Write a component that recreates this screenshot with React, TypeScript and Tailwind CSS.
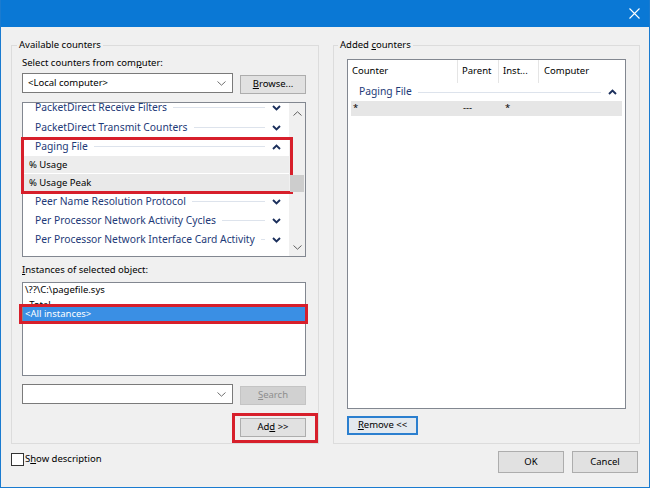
import React from "react";

function Chev({ up }: { up?: boolean }) {
  return (
    <svg width="9" height="6" viewBox="0 0 9 6" className="shrink-0">
      <path
        d={up ? "M1 5L4.5 1.6L8 5" : "M1 1L4.5 4.4L8 1"}
        fill="none"
        stroke="#1b2f5c"
        strokeWidth="1.9"
      />
    </svg>
  );
}

function ThinChev({ up, color = "#606060" }: { up?: boolean; color?: string }) {
  return (
    <svg width="9" height="5" viewBox="0 0 9 5" className="shrink-0">
      <path
        d={up ? "M0.5 4.5L4.5 0.8L8.5 4.5" : "M0.5 0.5L4.5 4.2L8.5 0.5"}
        fill="none"
        stroke={color}
        strokeWidth="1"
      />
    </svg>
  );
}

function Cat({ label, up }: { label: string; up?: boolean }) {
  return (
    <div className="h-[19px] shrink-0 flex items-center pl-[12px] pr-[8px]">
      <span className="text-[10.3px] leading-[19px] text-[#1e3a78] whitespace-nowrap">{label}</span>
      <div className="flex-1 h-px bg-[#dde3ec] ml-[6px] mr-[7px]" />
      <Chev up={up} />
    </div>
  );
}

function Btn({
  children,
  disabled,
  className = "",
}: {
  children: React.ReactNode;
  disabled?: boolean;
  className?: string;
}) {
  return (
    <div
      className={
        "h-[19px] w-[66px] flex items-center justify-center border text-[9.5px] " +
        (disabled
          ? "bg-[#d1d1d1] border-[#c4c4c4] text-[#8e8e8e] "
          : "bg-[#e1e1e1] border-[#adadad] text-black ") +
        className
      }
    >
      {children}
    </div>
  );
}

function Combo({ text }: { text?: string }) {
  return (
    <div className="w-[211px] h-[20px] bg-white border border-[#7a7a7a] flex items-center pl-[5px] pr-[6px]">
      <span className="flex-1 text-[9.5px] text-black whitespace-nowrap">{text}</span>
      <ThinChev color="#707070" />
    </div>
  );
}

export default function App() {
  return (
    <div className="w-[650px] h-[488px] bg-[#f0f0f0] border-x border-b border-[#1a7bd0] flex flex-col font-['Noto_Sans',sans-serif] text-black overflow-hidden">
      {/* title bar */}
      <div className="h-[27px] shrink-0 bg-[#0a78d5] flex items-center justify-end pr-[9px]">
        <svg width="11" height="11" viewBox="0 0 11 11">
          <path d="M0.5 0.5L10.5 10.5M10.5 0.5L0.5 10.5" stroke="white" strokeWidth="1.1" />
        </svg>
      </div>

      {/* body */}
      <div className="flex pl-[10px] pr-[9px] pt-[10px] gap-[14px]">
        {/* left group */}
        <fieldset className="w-[308px] h-[407px] border border-[#dcdcdc] p-0 m-0 min-w-0">
          <legend className="ml-[5px] px-[2px] text-[9.5px] leading-[16px]">Available counters</legend>
          <div className="flex flex-col pl-[10px] pr-[12px]">
            <div className="mt-[3px] h-[14px] leading-[14px] text-[9.5px]">
              Select counters from com<span className="underline">p</span>uter:
            </div>
            <div className="mt-[3px] flex justify-between items-start">
              <Combo text="<Local computer>" />
              <Btn className="mt-[2px]">
                <span>
                  <span className="underline">B</span>rowse...
                </span>
              </Btn>
            </div>

            {/* counters list */}
            <div className="mt-[8px] w-[284px] h-[155px] border border-[#828790] bg-white flex">
              <div className="flex-1 flex flex-col">
                <div className="h-[15px] overflow-hidden shrink-0">
                  <div className="-mt-[5px]">
                    <Cat label="PacketDirect Receive Filters" />
                  </div>
                </div>
                <Cat label="PacketDirect Transmit Counters" />
                <div className="relative">
                  <Cat label="Paging File" up />
                  <div className="h-[17px] bg-[#ededed] pl-[6px] text-[9.5px] leading-[17px]">% Usage</div>
                  <div className="mt-px h-[17px] bg-[#e9e9e9] pl-[6px] text-[9.5px] leading-[17px]">% Usage Peak</div>
                  <div className="absolute -left-[2px] -right-[4px] top-0 -bottom-[3px] border-[3px] border-[#d71f2b] pointer-events-none" />
                </div>
                <div className="mt-[1px]">
                  <Cat label="Peer Name Resolution Protocol" />
                </div>
                <Cat label="Per Processor Network Activity Cycles" />
                <Cat label="Per Processor Network Interface Card Activity" />
              </div>
              <div className="w-[16px] bg-[#f0f0f0] flex flex-col items-center">
                <div className="h-[17px] flex items-center justify-center mt-[2px]">
                  <ThinChev up />
                </div>
                <div className="flex-1 w-full relative">
                  <div className="absolute left-[1px] right-[1px] top-[53px] h-[17px] bg-[#cdcdcd]" />
                </div>
                <div className="h-[17px] flex items-center justify-center">
                  <ThinChev />
                </div>
              </div>
            </div>

            <div className="mt-[6px] h-[14px] leading-[14px] text-[9.5px]">
              <span className="underline">I</span>nstances of selected object:
            </div>

            {/* instances list */}
            <div className="mt-[5px] w-[284px] h-[94px] border border-[#828790] bg-white flex flex-col text-[9.5px]">
              <div className="mt-[1px] h-[11px] leading-[12px] pl-[2px] whitespace-nowrap">\??\C:\pagefile.sys</div>
              <div className="h-[11px] leading-[19px] pl-[2px] whitespace-nowrap">_Total</div>
              <div className="relative h-[15px] bg-[#3a8fe4] text-white leading-[15px] pl-[2px]">
                &lt;All instances&gt;
                <div className="absolute -left-[4px] -right-[3px] -top-[2px] -bottom-[3px] border-[3px] border-[#d71f2b]" />
              </div>
            </div>

            <div className="mt-[8px] flex justify-between items-start">
              <Combo />
              <Btn disabled className="mt-[2px]">
                <span>
                  <span className="underline">S</span>earch
                </span>
              </Btn>
            </div>

            <div className="mt-[13px] flex justify-end">
              <div className="relative">
                <Btn>
                  <span>
                    Ad<span className="underline">d</span> &gt;&gt;
                  </span>
                </Btn>
                <div className="absolute -left-[8px] -right-[12px] -top-[5px] -bottom-[6px] border-[3px] border-[#d71f2b]" />
              </div>
            </div>
          </div>
        </fieldset>

        {/* right group */}
        <fieldset className="w-[307px] h-[407px] border border-[#dcdcdc] p-0 m-0 min-w-0">
          <legend className="ml-[4px] px-[2px] text-[9.5px] leading-[16px]">
            Added <span className="underline">c</span>ounters
          </legend>
          <div className="flex flex-col pl-[13px] pr-[13px]">
            <div className="mt-[6px] w-[279px] h-[350px] border border-[#828790] bg-white flex flex-col text-[9.5px]">
              <div className="h-[23px] flex">
                <div className="w-[110px] pl-[4px] flex items-center border-r border-[#e5e5e5]">Counter</div>
                <div className="w-[41px] pl-[4px] flex items-center border-r border-[#e5e5e5]">Parent</div>
                <div className="w-[40px] pl-[4px] flex items-center border-r border-[#e5e5e5]">Inst...</div>
                <div className="flex-1 pl-[5px] flex items-center">Computer</div>
              </div>
              <div className="h-[18px] flex items-center pl-[11px] pr-[8px]">
                <span className="text-[10.3px] text-[#1e3a78] whitespace-nowrap">Paging File</span>
                <div className="flex-1 h-px bg-[#dde3ec] ml-[6px] mr-[7px]" />
                <Chev up />
              </div>
              <div className="mx-[3px] h-[15px] bg-[#e6e6e6] flex items-center">
                <span className="w-[111px] pl-[2px]">*</span>
                <span className="w-[42px] pl-[1px]">---</span>
                <span className="pl-[1px]">*</span>
              </div>
            </div>
            <div className="mt-[7px]">
              <div className="w-[71px] h-[19px] border-2 border-[#2b7fcf] bg-[#e3e9ef] flex items-center justify-center text-[9.5px]">
                <span>
                  <span className="underline">R</span>emove &lt;&lt;
                </span>
              </div>
            </div>
          </div>
        </fieldset>
      </div>

      {/* bottom */}
      <div className="flex justify-between items-start pl-[10px] pr-[11px]">
        <div className="mt-[8px] flex items-center">
          <div className="w-[13px] h-[13px] border border-[#333333] bg-white" />
          <span className="ml-[1px] text-[9.5px]">
            S<span className="underline">h</span>ow description
          </span>
        </div>
        <div className="mt-[7px] flex gap-[8px]">
          <div className="w-[66px] h-[22px] bg-[#e1e1e1] border border-[#adadad] flex items-center justify-center text-[9.5px]">OK</div>
          <div className="w-[66px] h-[22px] bg-[#e1e1e1] border border-[#adadad] flex items-center justify-center text-[9.5px]">Cancel</div>
        </div>
      </div>
    </div>
  );
}
